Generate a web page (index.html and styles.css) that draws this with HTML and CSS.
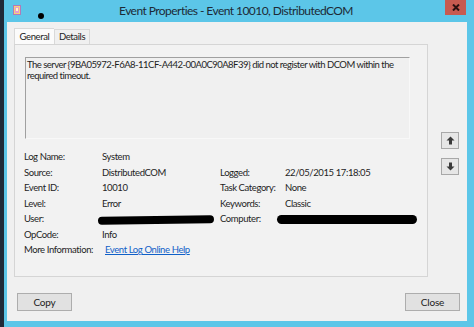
FILE: index.html
```html
<!DOCTYPE html>
<html>
<head>
<meta charset="utf-8">
<link rel="stylesheet" href="styles.css">
</head>
<body>
<div class="screen">
  <div class="desk"></div>
  <div class="window">
    <div class="titlebar">
      <svg class="appicon" width="8" height="10" viewBox="0 0 8 10">
        <rect x="0.5" y="0.5" width="7" height="9" fill="#f3d27a" stroke="#b07ab8"/>
        <rect x="2" y="2" width="4" height="6" fill="#e89bd0"/>
        <rect x="3" y="3" width="2" height="3" fill="#fff5c0"/>
      </svg>
      <div class="title">Event Properties - Event 10010, DistributedCOM</div>
      <div class="closebtn">
        <svg width="8" height="7" viewBox="0 0 8 7"><path d="M1 0.5 L7 6.5 M7 0.5 L1 6.5" stroke="#2a1010" stroke-width="2"/></svg>
      </div>
      <div class="dot"></div>
    </div>
    <div class="client">
      <div class="main">
        <div class="leftcol">
          <div class="tabs">
            <div class="tab active">General</div>
            <div class="tab">Details</div>
          </div>
          <div class="panel">
            <div class="desc">The server {9BA05972-F6A8-11CF-A442-00A0C90A8F39} did not register with DCOM within the required timeout.</div>
            <div class="props">
              <div class="lbl">Log Name:</div><div class="val">System</div><div></div><div></div>
              <div class="lbl">Source:</div><div class="val">DistributedCOM</div><div class="lbl">Logged:</div><div class="val">22/05/2015 17:18:05</div>
              <div class="lbl">Event ID:</div><div class="val">10010</div><div class="lbl">Task Category:</div><div class="val">None</div>
              <div class="lbl">Level:</div><div class="val">Error</div><div class="lbl">Keywords:</div><div class="val">Classic</div>
              <div class="lbl">User:</div><div class="val"><span class="blot blot-user"></span></div><div class="lbl">Computer:</div><div class="val"><span class="blot blot-comp"></span></div>
              <div class="lbl">OpCode:</div><div class="val">Info</div><div></div><div></div>
              <div class="lbl">More Information:</div><div class="val span3"><a class="link" href="#">Event Log Online Help</a></div>
            </div>
          </div>
        </div>
        <div class="arrows">
          <div class="arrowbtn">
            <svg width="9" height="9" viewBox="0 0 9 9"><path d="M4.5 0.5 L8.5 4.5 L6 4.5 L6 8.5 L3 8.5 L3 4.5 L0.5 4.5 Z" fill="#3a3a3a"/></svg>
          </div>
          <div class="arrowbtn">
            <svg width="9" height="9" viewBox="0 0 9 9"><path d="M4.5 8.5 L8.5 4.5 L6 4.5 L6 0.5 L3 0.5 L3 4.5 L0.5 4.5 Z" fill="#3a3a3a"/></svg>
          </div>
        </div>
      </div>
      <div class="footer">
        <button class="btn">Copy</button>
        <button class="btn">Close</button>
      </div>
    </div>
  </div>
</div>
</body>
</html>
```
FILE: styles.css
```css
html, body {
  margin: 0;
  padding: 0;
}
body {
  width: 474px;
  height: 327px;
  overflow: hidden;
  font-family: Lato, "Noto Sans", sans-serif;
  font-size: 9.5px;
  letter-spacing: -0.4px;
  color: #1e1e1e;
}
.screen {
  display: flex;
  width: 474px;
  height: 327px;
}
.desk {
  width: 4px;
  background: #1f2a38;
}
.window {
  flex: 1;
  background: #5cc6e8;
  display: flex;
  flex-direction: column;
  padding: 0 7px 6px 3px;
}
.titlebar {
  position: relative;
  height: 22px;
  display: flex;
  align-items: center;
}
.appicon {
  margin-left: 6px;
  margin-top: -2px;
}
.title {
  flex: 1;
  text-align: center;
  font-size: 12px;
  letter-spacing: -0.55px;
  color: #1c2a36;
  padding-left: 6px;
  margin-top: -1px;
  white-space: nowrap;
}
.closebtn {
  align-self: flex-start;
  width: 21px;
  height: 15px;
  background: #c75a50;
  display: flex;
  align-items: center;
  justify-content: center;
  margin-right: 1px;
}
.dot {
  position: absolute;
  left: 31px;
  top: 13px;
  width: 6px;
  height: 6px;
  border-radius: 50%;
  background: #000;
}
.client {
  flex: 1;
  background: #f0f0f0;
  display: flex;
  flex-direction: column;
}
.main {
  display: flex;
  padding: 6px 0 0 7px;
}
.leftcol {
  width: 414px;
}
.tabs {
  display: flex;
  align-items: flex-end;
  height: 16px;
}
.tab {
  height: 14px;
  padding: 0 4px;
  border: 1px solid #d9d9d9;
  border-bottom: none;
  background: #f0f0f0;
  line-height: 14px;
  color: #222;
}
.tab.active {
  height: 16px;
  width: 40px;
  box-sizing: border-box;
  text-align: center;
  background: #fbfbfb;
  padding: 0;
  border-right: none;
  line-height: 15px;
}
.panel {
  height: 233px;
  border: 1px solid #d5d5d5;
  background: #f2f2f2;
  padding: 12px 10px 0 10px;
  box-sizing: border-box;
}
.desc {
  height: 82px;
  box-sizing: border-box;
  border: 1px solid #f8f8f8;
  border-top-color: #a0a0a0;
  border-left-color: #a0a0a0;
  padding: 1px 1px;
  width: 385px;
  line-height: 11px;
  letter-spacing: -0.52px;
  background: #f0f0f0;
}
.props {
  display: grid;
  grid-template-columns: 78px 118px 65px 1fr;
  grid-auto-rows: 15.5px;
  margin-top: 10px;
  margin-left: -1px;
  line-height: 15.5px;
  white-space: nowrap;
}
.val.span3 {
  grid-column: span 3;
}
.link {
  color: #1060c8;
  text-decoration: underline;
  margin-left: 3px;
}
.blot {
  display: inline-block;
  background: #000;
  vertical-align: middle;
  border-radius: 5px;
}
.blot-user {
  width: 116px;
  height: 8px;
  margin-left: -4px;
  transform: rotate(-0.8deg);
}
.blot-comp {
  width: 140px;
  height: 9px;
  margin-left: -8px;
}
.arrows {
  display: flex;
  flex-direction: column;
  gap: 9px;
  margin-left: 13px;
  margin-top: 104px;
}
.arrowbtn {
  width: 16px;
  height: 15px;
  border: 1px solid #a8a8a8;
  background: #e6e6e6;
  display: flex;
  align-items: center;
  justify-content: center;
}
.footer {
  display: flex;
  justify-content: space-between;
  padding: 16px 7px 0 10px;
}
.btn {
  width: 55px;
  height: 18px;
  border: 1px solid #adadad;
  background: #e1e1e1;
  font-family: inherit;
  font-size: 10px;
  letter-spacing: -0.2px;
  color: #222;
  padding: 0;
  line-height: 15px;
}
```
